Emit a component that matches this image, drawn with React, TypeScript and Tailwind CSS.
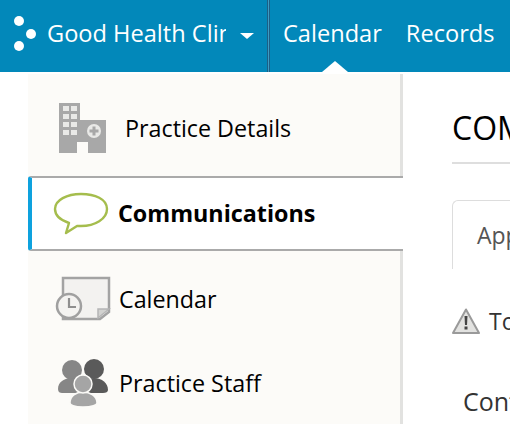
const font = { fontFamily: '"Open Sans", "Noto Sans", sans-serif' };

const BuildingIcon = () => (
  <svg width="49" height="52" viewBox="0 0 49 52" className="block shrink-0">
    <path d="M1 1h21v17h26v33H30V40H19v11H1z" fill="#a8a8a8" />
    <g fill="#e9e9e7">
      <rect x="5" y="4" width="6" height="5" />
      <rect x="13" y="4" width="6" height="5" />
      <rect x="5" y="12" width="6" height="5" />
      <rect x="13" y="12" width="6" height="5" />
      <rect x="5" y="20" width="6" height="5" />
      <rect x="13" y="20" width="6" height="5" />
      <rect x="5" y="28" width="6" height="5" />
      <rect x="13" y="28" width="6" height="5" />
    </g>
    <circle cx="36" cy="29" r="7" fill="#e9e9e7" />
    <path d="M34.5 24.5h3v3h3v3h-3v3h-3v-3h-3v-3h3z" fill="#a8a8a8" />
  </svg>
);

const BubbleIcon = () => (
  <svg width="56" height="44" viewBox="0 0 56 44" className="block shrink-0">
    <path
      d="M28 2C14 2 2 8 2 17c0 6 5 11 14 14l-3 10 11-7c1 0 3 0 4 0 14 0 26-7 26-17S42 2 28 2z"
      fill="#fff"
      stroke="#a5bd4d"
      strokeWidth="2.4"
      strokeLinejoin="round"
    />
  </svg>
);

const CalendarIcon = () => (
  <svg width="56" height="46" viewBox="0 0 56 46" className="block shrink-0">
    <path d="M8 2h46v34l-9 7H8z" fill="#f3f2f0" stroke="#a3a3a3" strokeWidth="2.5" />
    <path d="M43 42v-9h11z" fill="#d2d2d0" stroke="#b5b5b5" strokeWidth="1.5" />
    <circle cx="14" cy="30" r="12" fill="#f4f3f1" stroke="#a0a0a0" strokeWidth="2.5" />
    <path d="M14 22v9h7" fill="none" stroke="#8f8f8f" strokeWidth="2.2" />
  </svg>
);

const StaffIcon = () => (
  <svg width="52" height="48" viewBox="0 0 52 48" className="block shrink-0">
    <circle cx="37" cy="10" r="10" fill="#5a5a5a" />
    <path d="M23 30c0-7 6-11 14-11s14 5 14 12c0 2-2 3-5 3H26z" fill="#5a5a5a" />
    <circle cx="15" cy="11" r="10" fill="#868686" />
    <path d="M1 30c0-7 6-11 14-11s14 4 14 11c0 3-2 4-5 4H5c-2 0-4-1-4-4z" fill="#868686" />
    <path d="M13 44c0-7 6-11 13-11s14 4 14 11c0 2-5 4-14 4s-13-2-13-4z" fill="#a5a5a5" stroke="#fbfaf7" strokeWidth="1.5" />
    <circle cx="26" cy="25" r="9" fill="#a5a5a5" stroke="#fbfaf7" strokeWidth="1.5" />
  </svg>
);

const WarningIcon = () => (
  <svg width="28" height="26" viewBox="0 0 28 26" className="block shrink-0">
    <path d="M14 1.5 27 25H1z" fill="#e2e2e0" stroke="#9a9a9a" strokeWidth="2" strokeLinejoin="round" />
    <path d="M12.5 8h3l-.5 9h-2z" fill="#444" />
    <rect x="12.5" y="18.5" width="3" height="3" fill="#444" />
  </svg>
);

const App = () => {
  return (
    <div className="flex h-[424px] w-[510px] flex-col overflow-hidden bg-white text-black" style={font}>
      <header className="flex h-[72px] shrink-0 items-center bg-[#0288ba] text-white">
        <div className="flex h-full w-[267px] shrink-0 items-center">
          <svg width="28" height="40" viewBox="0 0 28 40" className="mb-[9px] ml-[10px] block shrink-0">
            <circle cx="9" cy="9" r="5" fill="#fff" />
            <circle cx="21" cy="22" r="5" fill="#fff" />
            <circle cx="9" cy="34" r="5" fill="#fff" />
          </svg>
          <div className="mb-[5px] ml-[9px] w-[179px] overflow-hidden text-[23.6px] leading-none whitespace-nowrap">
            Good Health Clinic
          </div>
          <div className="ml-[14px] h-0 w-0 border-x-[7px] border-t-[6px] border-x-transparent border-t-white" />
        </div>
        <div className="h-full w-[3px] shrink-0 border-x border-[#1b5f86] bg-[#3d9cc4]" />
        <nav className="relative flex h-full items-center gap-[24px] pb-[5px] pl-[13px] text-[23.6px] leading-none whitespace-nowrap">
          <span>Calendar</span>
          <span>Records</span>
          <div className="absolute bottom-0 left-[52px] h-0 w-0 border-x-[13px] border-b-[11px] border-x-transparent border-b-white" />
        </nav>
      </header>

      <div className="mt-[2px] flex min-h-0 flex-1">
        <aside className="ml-[28px] flex w-[375px] shrink-0 flex-col border-r-[3px] border-[#e2e2e0] bg-[#fcfbf8] text-[23.3px]">
          <div className="flex h-[102px] shrink-0 items-center pt-[6px] pl-[30px]">
            <BuildingIcon />
            <span className="ml-[18px]">Practice Details</span>
          </div>
          <div className="z-10 mr-[-3px] flex h-[75px] shrink-0 items-center rounded-l-[3px] border-y-2 border-l-4 border-y-[#aaaaaa] border-l-[#0ea2de] bg-white pl-[21px]">
            <BubbleIcon />
            <span className="ml-[9px] font-bold">Communications</span>
          </div>
          <div className="flex h-[96px] shrink-0 items-center pl-[27px]">
            <CalendarIcon />
            <span className="ml-[8px]">Calendar</span>
          </div>
          <div className="flex h-[72px] shrink-0 items-center pl-[29px]">
            <StaffIcon />
            <span className="ml-[10px]">Practice Staff</span>
          </div>
        </aside>

        <main className="ml-[49px] min-w-0 flex-1 overflow-hidden">
          <div className="mt-[28px] h-[62px] border-b-2 border-[#dedede] pt-[1px] text-[32px] leading-[50px] whitespace-nowrap">
            COMMUNICATIONS
          </div>
          <div className="mt-[36px] flex h-[69px] items-center rounded-tl-[6px] border-t border-l border-[#dddddd] pl-[24px] text-[23px] whitespace-nowrap text-[#555555]">
            Appointment Reminders
          </div>
          <div className="mt-[35px] flex items-center text-[23px] whitespace-nowrap text-[#333333]">
            <WarningIcon />
            <span className="ml-[9px]">To send reminders</span>
          </div>
          <div className="mt-[44px] pl-[11px] text-[25px] whitespace-nowrap text-[#333333]">Contact</div>
        </main>
      </div>
    </div>
  );
};

export default App;
